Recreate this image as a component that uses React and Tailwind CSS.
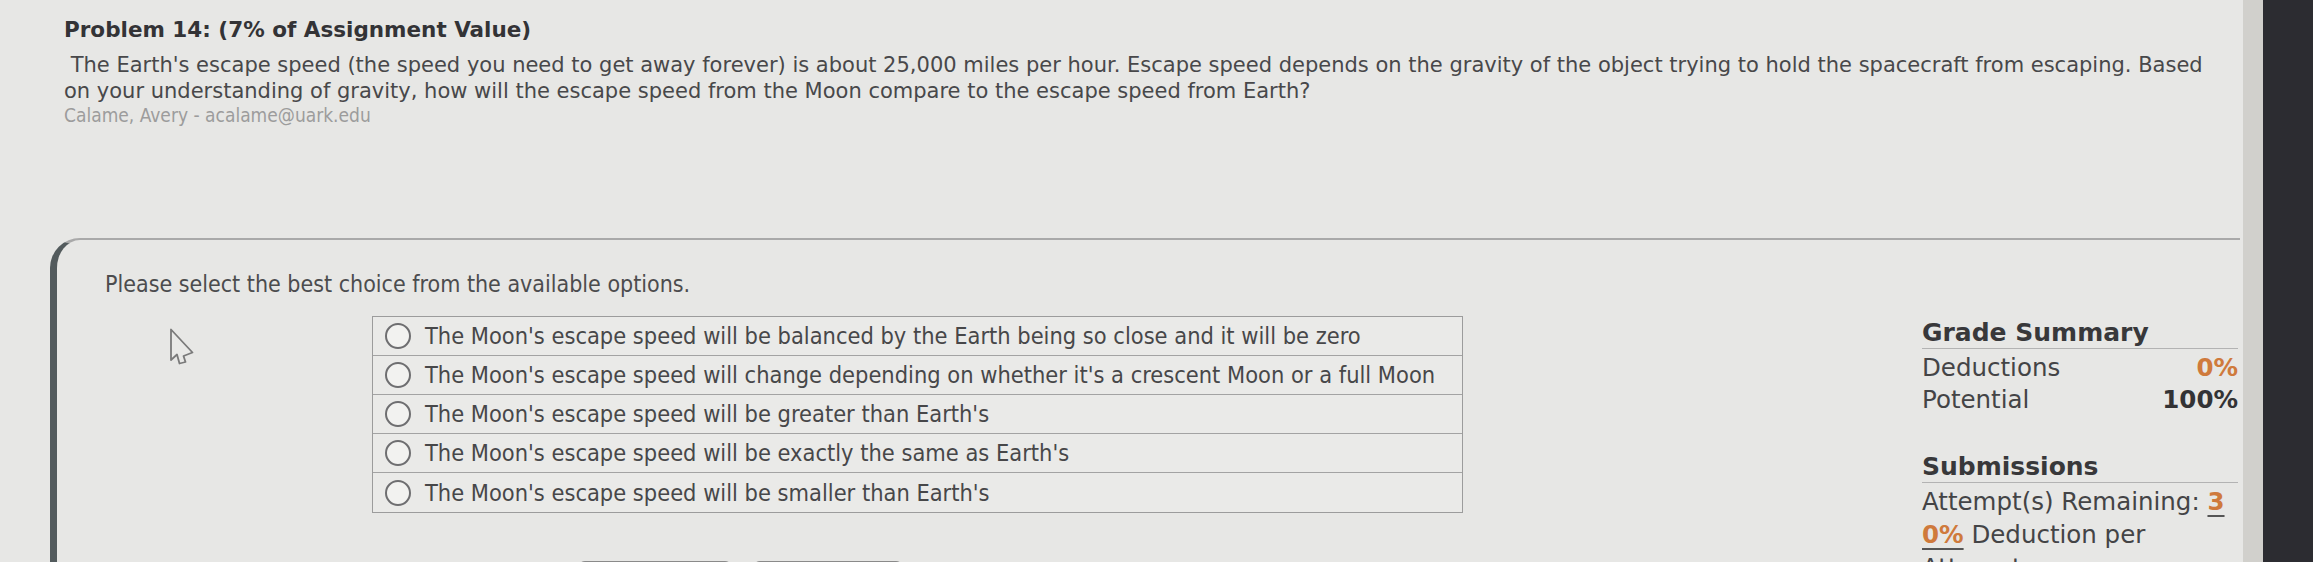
import React from "react";

const options = [
  "The Moon's escape speed will be balanced by the Earth being so close and it will be zero",
  "The Moon's escape speed will change depending on whether it's a crescent Moon or a full Moon",
  "The Moon's escape speed will be greater than Earth's",
  "The Moon's escape speed will be exactly the same as Earth's",
  "The Moon's escape speed will be smaller than Earth's",
];

function Cursor() {
  return (
    <svg
      className="absolute left-[169px] top-[328px]"
      width="26"
      height="38"
      viewBox="0 0 26 38"
      fill="none"
    >
      <path
        d="M2 1.5 L2 32 L8 26.5 L10.5 35.5 L16.5 34 L14.5 28 L23.5 24.5 Z"
        stroke="#7a7a7a"
        strokeWidth="1.8"
        strokeLinejoin="round"
        fill="#e9e9e7"
      />
    </svg>
  );
}

export default function App() {
  return (
    <div className="relative w-[2313px] h-[562px] overflow-hidden bg-[#e7e7e5] flex font-['DejaVu_Sans',sans-serif]">
      <div className="flex flex-col w-[2243px] shrink-0">
        {/* Header */}
        <div className="pl-[64px] pt-[18px]">
          <div className="text-[21.5px] leading-[24px] font-bold text-[#333336] whitespace-nowrap">
            Problem 14: (7% of Assignment Value)
          </div>
          <div className="mt-[10px] text-[21px] leading-[26px] text-[#48484a] whitespace-nowrap">
            <div>
              &nbsp;The Earth's escape speed (the speed you need to get away forever) is about 25,000 miles per hour. Escape speed depends on the gravity of the object trying to hold the spacecraft from escaping. Based
            </div>
            <div>
              on your understanding of gravity, how will the escape speed from the Moon compare to the escape speed from Earth?
            </div>
          </div>
          <div className="-mt-[1px] text-[19px] leading-[24px] text-[#9c9c9c] whitespace-nowrap font-['DejaVu_Sans_Condensed','DejaVu_Sans',sans-serif] font-stretch-condensed">
            Calame, Avery - acalame@uark.edu
          </div>
        </div>

        {/* Panel */}
        <div className="mt-[111px] ml-[50px] mr-[3px] flex-1 flex items-start border-l-[7px] border-l-[#535b5d] border-t-2 border-t-[#a9a9a9] rounded-tl-[30px]">
          <div className="flex-1 pt-[31px] pl-[48px] font-['DejaVu_Sans_Condensed','DejaVu_Sans',sans-serif] font-stretch-condensed">
            <div className="text-[23px] leading-[26px] text-[#4c4c4e] whitespace-nowrap">
              Please select the best choice from the available options.
            </div>
            <div className="mt-[19px] ml-[267px] w-[1091px] border-[1.5px] border-[#9c9c9c] flex flex-col">
              {options.map((o, i) => (
                <div
                  key={i}
                  className={
                    "h-[39px] flex items-center pl-[12px] gap-[14px] bg-[#eaeae8] " +
                    (i < options.length - 1 ? "border-b-[1.5px] border-[#a3a3a3]" : "")
                  }
                >
                  <span className="w-[26px] h-[26px] rounded-full border-2 border-[#6e6e70] bg-[#f2f2f0] shrink-0" />
                  <span className="text-[23.4px] leading-[26px] text-[#474749] whitespace-nowrap">
                    {o}
                  </span>
                </div>
              ))}
            </div>
            <div className="mt-[48px] ml-[473px] flex gap-[21px]">
              <div className="w-[154px] h-[30px] rounded-t-[7px] border-2 border-[#8a8a8a] bg-[#ececea]" />
              <div className="w-[150px] h-[30px] rounded-t-[7px] border-2 border-[#8a8a8a] bg-[#ececea]" />
            </div>
          </div>

          {/* Right column */}
          <div className="w-[316px] shrink-0 mr-[2px] pt-[78px] text-[#444446]">
            <div className="text-[25px] leading-[30px] font-bold text-[#38383a] border-b border-[#b3b3b3]">
              Grade Summary
            </div>
            <div className="mt-[3px] flex justify-between text-[24.5px] leading-[32px]">
              <span>Deductions</span>
              <span className="font-bold text-[#cf7a3c]">0%</span>
            </div>
            <div className="flex justify-between text-[24.5px] leading-[32px]">
              <span>Potential</span>
              <span className="font-bold text-[#333335]">100%</span>
            </div>
            <div className="mt-[35px] text-[25px] leading-[31px] font-bold text-[#38383a] border-b border-[#b3b3b3]">
              Submissions
            </div>
            <div className="mt-[2px] text-[24.5px] leading-[33px] whitespace-nowrap">
              Attempt(s) Remaining:{" "}
              <span className="font-bold text-[#cf7a3c] underline decoration-[#555] decoration-[1.5px] underline-offset-[5px]">
                3
              </span>
            </div>
            <div className="text-[24.5px] leading-[33px] whitespace-nowrap">
              <span className="font-bold text-[#cf7a3c] underline decoration-[#555] decoration-[1.5px] underline-offset-[5px]">
                0%
              </span>{" "}
              Deduction per
            </div>
            <div className="text-[24.5px] leading-[33px] whitespace-nowrap">Attempt</div>
          </div>
        </div>
      </div>
      <div className="w-[20px] shrink-0 bg-[#d1d0cc]" />
      <div className="flex-1 bg-[#2c2c31]" />
      <Cursor />
    </div>
  );
}
